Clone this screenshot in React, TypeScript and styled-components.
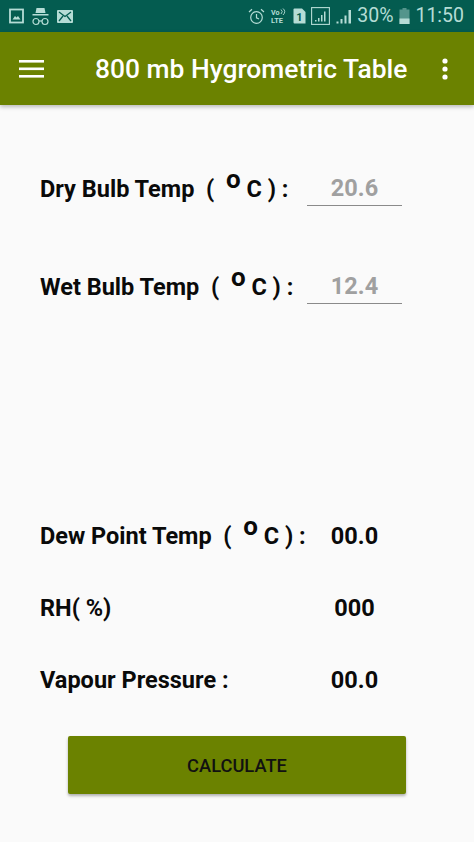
import React from "react";
import styled, { createGlobalStyle } from "styled-components";

const Global = createGlobalStyle`
  html, body { margin: 0; padding: 0; background: #fafafa; }
  body { font-family: Roboto, "Liberation Sans", sans-serif; }
  * { box-sizing: border-box; }
`;

const Page = styled.div`
  width: 474px;
  height: 842px;
  display: flex;
  flex-direction: column;
  overflow: hidden;
  background: #fafafa;
`;

const StatusBar = styled.div`
  height: 32px;
  flex: none;
  background: #045c50;
  display: flex;
  align-items: center;
  justify-content: space-between;
  padding: 0 10px 0 9px;
  color: #b5dcd5;
`;

const StatusGroup = styled.div<{ $gap: number }>`
  display: flex;
  align-items: center;
  gap: ${(p) => p.$gap}px;
`;

const StatusText = styled.span`
  font-size: 19.5px;
  line-height: 32px;
  color: #b5dcd5;
`;

const Toolbar = styled.header`
  height: 73px;
  flex: none;
  background: #6b8200;
  display: flex;
  align-items: center;
  padding: 0 25px 0 19px;
  box-shadow: 0 2px 4px rgba(0, 0, 0, 0.25);
  color: #fff;
`;

const Title = styled.h1`
  flex: 1;
  margin: 0 0 0 50px;
  font-size: 26.4px;
  font-weight: 500;
  white-space: nowrap;
`;

const Content = styled.main`
  flex: 1;
  display: flex;
  flex-direction: column;
  padding: 0 40px;
`;

const Row = styled.div<{ $top: number }>`
  display: flex;
  align-items: center;
  height: 40px;
  margin-top: ${(p) => p.$top}px;
`;

const Label = styled.div`
  width: 248px;
  flex: none;
  font-size: 23.5px;
  font-weight: 700;
  color: #0a0a0a;
  white-space: pre;
`;

const Degree = styled.span`
  font-size: 26px;
  vertical-align: 9px;
  line-height: 0;
`;

const InputValue = styled.div`
  width: 95px;
  height: 34px;
  margin-left: 19px;
  border-bottom: 1.5px solid #8a8a8a;
  color: #a0a0a0;
  font-size: 23.5px;
  font-weight: 700;
  line-height: 32px;
  text-align: center;
`;

const Result = styled.div`
  width: 95px;
  margin-left: 19px;
  color: #0a0a0a;
  font-size: 23.5px;
  font-weight: 700;
  text-align: center;
`;

const CalcButton = styled.button`
  width: 338px;
  height: 58px;
  margin: 36px 0 0 28px;
  padding: 0;
  border: none;
  border-radius: 2px;
  background: #6b8200;
  color: #111;
  font-family: inherit;
  font-size: 18.3px;
  font-weight: 500;
  box-shadow: 0 2px 3px rgba(0, 0, 0, 0.3);
`;

const PictureIcon = () => (
  <svg width="15" height="16" viewBox="0 0 15 16">
    <rect x="1" y="1.5" width="13" height="13" fill="none" stroke="currentColor" strokeWidth="1.8" />
    <path d="M3.5 11.5 L6 8 L7.5 9.5 L9 8 L11.5 11.5Z" fill="currentColor" />
  </svg>
);

const IncognitoIcon = () => (
  <svg width="17" height="19" viewBox="0 0 17 19">
    <path d="M4.5 1 H12.5 L13.5 6 H3.5Z M0.5 7 H16.5 V8.5 H0.5Z" fill="currentColor" />
    <circle cx="4" cy="14.5" r="3" fill="none" stroke="currentColor" strokeWidth="1.2" />
    <circle cx="13" cy="14.5" r="3" fill="none" stroke="currentColor" strokeWidth="1.2" />
    <path d="M7 14 H10" stroke="currentColor" strokeWidth="1.2" />
  </svg>
);

const MailIcon = () => (
  <svg width="16" height="13" viewBox="0 0 16 13">
    <rect width="16" height="13" rx="1" fill="currentColor" />
    <path d="M2 2 L8 6.5 L14 2 M2 11 L6 6 M14 11 L10 6" fill="none" stroke="#045c50" strokeWidth="1.3" />
  </svg>
);

const AlarmIcon = () => (
  <svg width="17" height="17" viewBox="0 0 17 17" fill="none" stroke="currentColor">
    <circle cx="8.5" cy="9.5" r="5.8" strokeWidth="1.2" />
    <path d="M8.5 6 V9.8 L11 11 M1 4 L4 1.2 M16 4 L13 1.2" strokeWidth="1.2" />
  </svg>
);

const VolteIcon = () => (
  <svg width="17" height="16" viewBox="0 0 17 16" fill="currentColor" fontFamily="Roboto, sans-serif" fontWeight="700">
    <text x="1" y="6.5" fontSize="7.2">Vo</text>
    <text x="1" y="14.5" fontSize="7.4">LTE</text>
    <path d="M11 1.5 Q13.5 3.5 11 6 M13 0.5 Q16.5 3.5 13 7" fill="none" stroke="currentColor" strokeWidth="0.9" />
  </svg>
);

const SimIcon = () => (
  <svg width="13" height="16" viewBox="0 0 13 16">
    <path d="M1.5 0.5 H9 L12.5 4 V15.5 H1.5 Q0.5 15.5 0.5 14.5 V1.5 Q0.5 0.5 1.5 0.5Z" fill="currentColor" />
    <text x="6.5" y="12.5" textAnchor="middle" fontSize="11" fontWeight="700" fontFamily="Roboto, sans-serif" fill="#045c50">1</text>
  </svg>
);

const BoxedSignalIcon = () => (
  <svg width="19" height="18" viewBox="0 0 19 18" fill="currentColor">
    <rect x="0.6" y="0.6" width="17.8" height="16.8" fill="none" stroke="currentColor" strokeWidth="1.1" />
    <path d="M4 13 h1.5 v1.5 h-1.5z M7 11 h1.5 v3.5 h-1.5z M10 8 h1.5 v6.5 h-1.5z M13 4.5 h1.5 v10 h-1.5z" />
  </svg>
);

const SignalIcon = () => (
  <svg width="16" height="15" viewBox="0 0 16 15" fill="currentColor">
    <path d="M0.5 12.5 h2 v2 h-2z M4.5 10 h2 v4.5 h-2z M8.5 6.5 h2 v8 h-2z M12.5 1 h2.5 v13.5 h-2.5z" />
  </svg>
);

const BatteryIcon = () => (
  <svg width="11" height="16" viewBox="0 0 11 16">
    <path d="M3.5 0 H7.5 V1.5 H10.5 V16 H0.5 V1.5 H3.5Z" fill="currentColor" opacity="0.45" />
    <rect x="0.5" y="10.5" width="10" height="5.5" fill="currentColor" />
  </svg>
);

const MenuIcon = () => (
  <svg width="26" height="18" viewBox="0 0 26 18" fill="#fff">
    <rect y="0" width="25" height="2.6" />
    <rect y="7.5" width="25" height="2.6" />
    <rect y="15" width="25" height="2.6" />
  </svg>
);

const MoreIcon = () => (
  <svg width="8" height="22" viewBox="0 0 8 22" fill="#fff">
    <circle cx="4" cy="3" r="2.6" />
    <circle cx="4" cy="11" r="2.6" />
    <circle cx="4" cy="19" r="2.6" />
  </svg>
);

const TempLabel = ({ name }: { name: string }) => (
  <Label>
    {name}  (  <Degree>o</Degree> C ) :
  </Label>
);

export default function App() {
  return (
    <Page>
      <Global />
      <StatusBar>
        <StatusGroup $gap={8}>
          <PictureIcon />
          <IncognitoIcon />
          <MailIcon />
        </StatusGroup>
        <StatusGroup $gap={5.5}>
          <AlarmIcon />
          <VolteIcon />
          <SimIcon />
          <BoxedSignalIcon />
          <SignalIcon />
          <StatusText>30%</StatusText>
          <BatteryIcon />
          <StatusText>11:50</StatusText>
        </StatusGroup>
      </StatusBar>
      <Toolbar>
        <MenuIcon />
        <Title>800 mb Hygrometric Table</Title>
        <MoreIcon />
      </Toolbar>
      <Content>
        <Row $top={64}>
          <TempLabel name="Dry Bulb Temp" />
          <InputValue>20.6</InputValue>
        </Row>
        <Row $top={58}>
          <TempLabel name="Wet Bulb Temp" />
          <InputValue>12.4</InputValue>
        </Row>
        <Row $top={209}>
          <TempLabel name="Dew Point Temp" />
          <Result>00.0</Result>
        </Row>
        <Row $top={32}>
          <Label>RH( %)</Label>
          <Result>000</Result>
        </Row>
        <Row $top={32}>
          <Label>Vapour Pressure :</Label>
          <Result>00.0</Result>
        </Row>
        <CalcButton>CALCULATE</CalcButton>
      </Content>
    </Page>
  );
}
